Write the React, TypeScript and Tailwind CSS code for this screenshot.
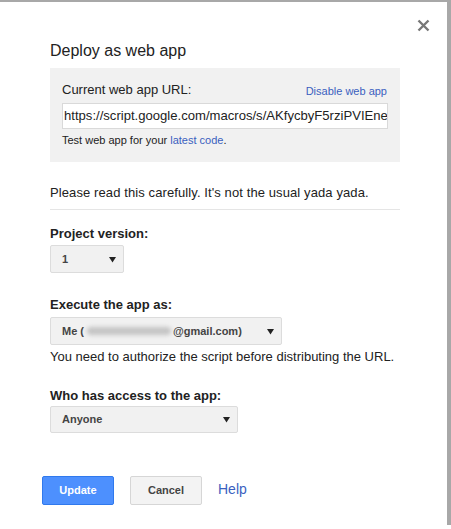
import React from "react";

function Arrow() {
  return (
    <svg width="7" height="7" viewBox="0 0 7 7" className="shrink-0">
      <path d="M0 1 L7 1 L3.5 6.5 Z" fill="#222" />
    </svg>
  );
}

export default function App() {
  return (
    <div
      className="w-[451px] h-[529px] bg-white relative overflow-hidden text-[#222]"
      style={{ fontFamily: '"Liberation Sans", Arial, sans-serif' }}
    >
      <div className="absolute top-0 left-0 right-0 h-[2px] bg-[#a8a8a8]" />
      <div className="absolute top-0 right-0 bottom-[4px] w-[4px] bg-[#a8a8a8]" />
      <div className="absolute top-[19px] left-[417px] text-[#777]">
        <svg width="13" height="13" viewBox="0 0 13 13">
          <path d="M1.5 1.5 L11.5 11.5 M11.5 1.5 L1.5 11.5" stroke="#777" strokeWidth="2.4" />
        </svg>
      </div>

      <div className="pl-[50px] pt-[41px] w-[350px] box-content">
        <div className="text-[16px] leading-[20px] text-[#222]">Deploy as web app</div>
        <div className="mt-[7px] bg-[#f1f1f1] h-[94px] px-[12px] pt-[14px]">
          <div className="flex items-end justify-between">
            <span className="text-[13px] leading-[16px]">Current web app URL:</span>
            <span className="text-[11px] leading-[14px] text-[#3a5fbf] pr-[1px]">Disable web app</span>
          </div>
          <div className="mt-[5px] h-[26px] bg-white border border-[#d9d9d9] flex items-center pl-[1px] overflow-hidden whitespace-nowrap text-[13.1px]">
            https://script.google.com/macros/s/AKfycbyF5rziPVIEne
          </div>
          <div className="mt-[4px] text-[11px] leading-[14px]">
            Test web app for your <span className="text-[#3a5fbf]">latest code</span>.
          </div>
        </div>

        <div className="mt-[23px] text-[13px] leading-[16px] tracking-[0.1px]">Please read this carefully. It's not the usual yada yada.</div>
        <div className="mt-[8px] h-px bg-[#e5e5e5]" />

        <div className="mt-[16px] text-[13px] leading-[16px] font-bold">Project version:</div>
        <div className="mt-[3px] w-[74px] h-[28px] bg-[#f1f1f1] border border-[#dcdcdc] rounded-[2px] flex items-center justify-between pl-[11px] pr-[7px]">
          <span className="text-[11px] font-bold text-[#444]">1</span>
          <Arrow />
        </div>

        <div className="mt-[24px] text-[13px] leading-[16px] font-bold">Execute the app as:</div>
        <div className="mt-[4px] w-[232px] h-[28px] bg-[#f1f1f1] border border-[#dcdcdc] rounded-[2px] flex items-center justify-between pl-[11px] pr-[7px]">
          <span className="text-[11px] font-bold text-[#444] flex items-center">
            Me (
            <span className="relative inline-block w-[88px] h-[10px] ml-[1px]">
              <span className="absolute left-[2px] top-[1px] w-[84px] h-[8px] rounded-full bg-[#c4c4c4] blur-[2px]" />
            </span>
            @gmail.com)
          </span>
          <Arrow />
        </div>
        <div className="mt-[4px] text-[13px] leading-[16px]">You need to authorize the script before distributing the URL.</div>

        <div className="mt-[23px] text-[13px] leading-[16px] font-bold">Who has access to the app:</div>
        <div className="mt-[2px] w-[188px] h-[27px] bg-[#f1f1f1] border border-[#dcdcdc] rounded-[2px] flex items-center justify-between pl-[11px] pr-[7px]">
          <span className="text-[11px] font-bold text-[#444]">Anyone</span>
          <Arrow />
        </div>
      </div>

      <div className="flex items-center pl-[42px] mt-[43px]">
        <div className="w-[72px] h-[29px] bg-[#4d90fe] border border-[#3079ed] rounded-[2px] flex items-center justify-center text-white text-[11px] font-bold">
          Update
        </div>
        <div className="ml-[16px] w-[72px] h-[29px] bg-[#f3f3f3] border border-[#d6d6d6] rounded-[2px] flex items-center justify-center text-[#444] text-[11px] font-bold">
          Cancel
        </div>
        <div className="ml-[16px] text-[14px] text-[#3a5fbf] -mt-[3px]">Help</div>
      </div>
    </div>
  );
}
